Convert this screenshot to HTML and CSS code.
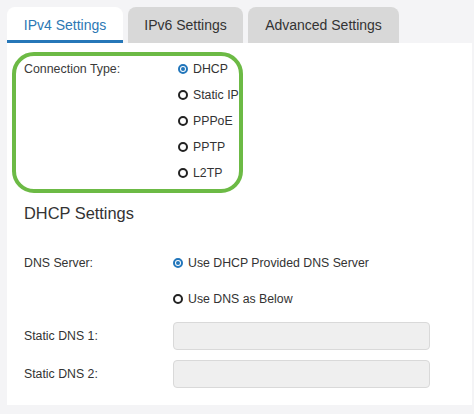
FILE: index.html
```html
<!DOCTYPE html>
<html>
<head>
<meta charset="utf-8">
<link rel="stylesheet" href="styles.css">
</head>
<body>
<div class="tabs">
  <div class="tab active t1">IPv4 Settings</div>
  <div class="tab t2">IPv6 Settings</div>
  <div class="tab t3">Advanced Settings</div>
</div>
<div class="panel">
  <div class="conn-box">
    <div class="conn-label">Connection Type:</div>
    <div class="radio-list">
      <div class="radio-row"><span class="radio checked"></span>DHCP</div>
      <div class="radio-row"><span class="radio"></span>Static IP</div>
      <div class="radio-row"><span class="radio"></span>PPPoE</div>
      <div class="radio-row"><span class="radio"></span>PPTP</div>
      <div class="radio-row"><span class="radio"></span>L2TP</div>
    </div>
  </div>
  <h2 class="section-title">DHCP Settings</h2>
  <div class="form">
    <div class="f-label r1">DNS Server:</div>
    <div class="f-ctrl r1"><div class="radio-row"><span class="radio checked"></span>Use DHCP Provided DNS Server</div></div>
    <div class="f-ctrl r2"><div class="radio-row"><span class="radio"></span>Use DNS as Below</div></div>
    <div class="f-label r3">Static DNS 1:</div>
    <div class="f-ctrl r3"><div class="input"></div></div>
    <div class="f-label r4">Static DNS 2:</div>
    <div class="f-ctrl r4"><div class="input"></div></div>
  </div>
</div>
</body>
</html>
```
FILE: styles.css
```css
html, body {
  margin: 0;
  padding: 0;
}
body {
  background: #f4f4f6;
  font-family: "Liberation Sans", Arial, sans-serif;
  color: #3a3a3a;
  width: 474px;
  height: 414px;
  overflow: hidden;
}
.tabs {
  display: flex;
  gap: 5px;
  padding: 7px 0 0 7px;
  height: 36px;
}
.tab {
  box-sizing: border-box;
  height: 36px;
  border-radius: 8px 8px 0 0;
  background: #d8d8d8;
  color: #333;
  font-size: 14px;
  line-height: 37px;
  text-align: center;
}
.t1 { width: 116px; }
.t2 { width: 115px; }
.t3 { width: 151px; }
.tab.active {
  background: #ffffff;
  color: #2c78b4;
  border-bottom: 3px solid #2677b8;
  line-height: 36px;
}
.panel {
  margin-left: 7px;
  width: 465px;
  height: 362px;
  background: #ffffff;
  overflow: hidden;
}
.conn-box {
  box-sizing: border-box;
  margin: 9px 0 0 5px;
  width: 231px;
  height: 141px;
  border: 4px solid #6cba45;
  border-radius: 22px;
  display: flex;
  padding: 0 0 0 8px;
}
.conn-label {
  width: 154px;
  font-size: 12.4px;
  line-height: 26px;
  color: #3a3a3a;
}
.radio-list {
  display: flex;
  flex-direction: column;
}
.radio-row {
  display: flex;
  align-items: center;
  height: 26px;
  font-size: 12.3px;
  color: #333;
  white-space: nowrap;
}
.radio {
  box-sizing: border-box;
  width: 10px;
  height: 10px;
  border: 2px solid #222;
  border-radius: 50%;
  margin-right: 5px;
  flex: none;
  position: relative;
}
.radio.checked {
  border-color: #2276bb;
}
.radio.checked::after {
  content: "";
  position: absolute;
  left: 1px;
  top: 1px;
  width: 4px;
  height: 4px;
  border-radius: 50%;
  background: #2276bb;
}
.section-title {
  margin: 8px 0 0 17px;
  font-size: 16.4px;
  font-weight: normal;
  line-height: 24px;
  color: #333;
}
.form {
  display: grid;
  grid-template-columns: 149px 257px;
  grid-template-rows: 26px 26px 28px 28px;
  row-gap: 10px;
  margin: 25px 0 0 17px;
  align-items: center;
}
.f-label {
  grid-column: 1;
  font-size: 12.3px;
  color: #333;
}
.f-ctrl { grid-column: 2; }
.r1 { grid-row: 1; }
.r2 { grid-row: 2; }
.r3 { grid-row: 3; }
.r4 { grid-row: 4; }
.r4.f-label, .r4.f-ctrl { margin-top: -1px; }
.input {
  box-sizing: border-box;
  height: 28px;
  width: 257px;
  background: #efefef;
  border: 1px solid #d9d9d9;
  border-radius: 4px;
}
```
